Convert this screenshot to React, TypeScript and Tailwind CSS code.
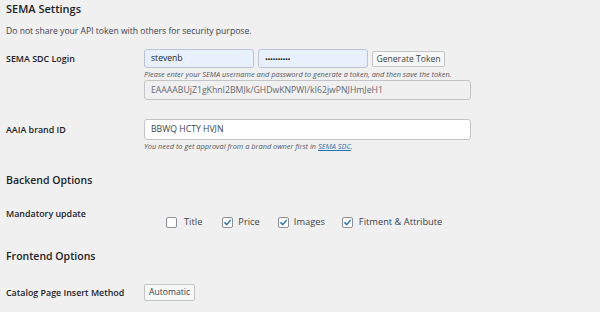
import React from "react";

const Check = ({ checked }: { checked: boolean }) => (
  <span className="w-[11px] h-[11px] border border-[#8c8f94] rounded-[2px] bg-white flex items-center justify-center shrink-0">
    {checked && (
      <svg width="9" height="9" viewBox="0 0 10 10">
        <path d="M2 5.2 L4.2 7.4 L8.2 2.6" fill="none" stroke="#2271b1" strokeWidth="1.6" strokeLinecap="round" strokeLinejoin="round" />
      </svg>
    )}
  </span>
);

export default function App() {
  const font = { fontFamily: '"Open Sans", "Noto Sans", sans-serif' };
  return (
    <div className="w-[600px] h-[312px] bg-[#f0f0f1] text-[#1d2327] overflow-hidden px-[6px]" style={font}>
      <h2 className="text-[11px] font-semibold leading-[14px] pt-[2px] text-[#1d2327]">SEMA Settings</h2>
      <p className="text-[8.6px] leading-[12px] mt-[9px] text-[#3c434a]">Do not share your API token with others for security purpose.</p>

      <div className="flex mt-[12px]">
        <div className="w-[138px] text-[8.9px] font-semibold leading-[19px]">SEMA SDC Login</div>
        <div className="flex flex-col">
          <div className="flex items-center gap-[4px]">
            <div className="w-[110px] h-[19px] bg-[#e8f0fe] border border-[#b9c5d6] rounded-[3px] px-[6px] text-[8.6px] leading-[17px]">stevenb</div>
            <div className="w-[110px] h-[19px] bg-[#e8f0fe] border border-[#b9c5d6] rounded-[3px] px-[6px] text-[8px] leading-[17px] tracking-[-0.5px]">••••••••••</div>
            <div className="w-[73px] h-[16px] bg-[#f6f7f7] border border-[#c3c4c7] rounded-[2px] text-[8.6px] leading-[14px] text-center text-[#3c434a]">Generate Token</div>
          </div>
          <div className="text-[7.4px] italic leading-[11px] mt-[1px] text-[#50575e]">Please enter your SEMA username and password to generate a token, and then save the token.</div>
          <div className="w-[327px] h-[20px] bg-[#f0f0f1] border border-[#c3c4c7] rounded-[3px] px-[6px] text-[8.7px] leading-[18px] text-[#646970]">EAAAABUjZ1gKhnI2BMJk/GHDwKNPWI/kI62jwPNJHmJeH1</div>
        </div>
      </div>

      <div className="flex mt-[19px]">
        <div className="w-[138px] text-[8.9px] font-semibold leading-[21px]">AAIA brand ID</div>
        <div className="flex flex-col">
          <div className="w-[327px] h-[21px] bg-white border border-[#c3c4c7] rounded-[3px] px-[6px] text-[8.7px] leading-[19px] text-[#3c434a]">BBWQ HCTY HVJN</div>
          <div className="text-[7.4px] italic leading-[11px] mt-[1px] text-[#50575e]">
            You need to get approval from a brand owner first in <span className="text-[#2271b1] underline">SEMA SDC</span>.
          </div>
        </div>
      </div>

      <h2 className="text-[10.5px] font-semibold leading-[14px] mt-[21px]">Backend Options</h2>

      <div className="flex mt-[21px]">
        <div className="w-[160px] text-[8.9px] font-semibold leading-[12px]">Mandatory update</div>
        <div className="flex items-center mt-[8px] text-[9.3px] leading-[12px] text-[#3c434a]">
          <Check checked={false} />
          <span className="ml-[7px] mr-[20px]">Title</span>
          <Check checked={true} />
          <span className="ml-[5px] mr-[18px]">Price</span>
          <Check checked={true} />
          <span className="ml-[5px] mr-[17px]">Images</span>
          <Check checked={true} />
          <span className="ml-[6px]">Fitment &amp; Attribute</span>
        </div>
      </div>

      <h2 className="text-[10.5px] font-semibold leading-[14px] mt-[21px]">Frontend Options</h2>

      <div className="flex items-center mt-[21px]">
        <div className="w-[138px] text-[8.9px] font-semibold leading-[12px]">Catalog Page Insert Method</div>
        <div className="w-[51px] h-[17px] bg-[#f6f7f7] border border-[#c3c4c7] rounded-[2px] text-[8.6px] leading-[15px] text-center text-[#3c434a]">Automatic</div>
      </div>
    </div>
  );
}
